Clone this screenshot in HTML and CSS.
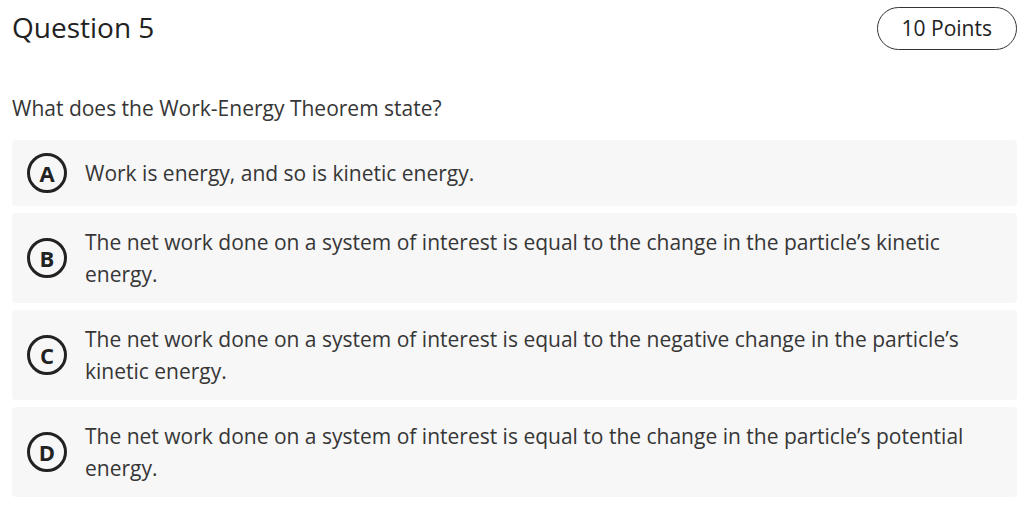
FILE: index.html
```html
<!DOCTYPE html>
<html lang="en">
<head>
    <meta charset="UTF-8">
    <title>Question 5</title>
    <link rel="stylesheet" href="styles.css">
</head>
<body>
    <div class="question">
        <div class="header">
            <h2>Question 5</h2>
            <div class="points">10 Points</div>
        </div>
        <p class="prompt">What does the Work-Energy Theorem state?</p>
        <div class="options">
            <div class="option">
                <span class="letter">A</span>
                <span class="text">Work is energy, and so is kinetic energy.</span>
            </div>
            <div class="option">
                <span class="letter">B</span>
                <span class="text">The net work done on a system of interest is equal to the change in the particle’s kinetic energy.</span>
            </div>
            <div class="option">
                <span class="letter">C</span>
                <span class="text">The net work done on a system of interest is equal to the negative change in the particle’s kinetic energy.</span>
            </div>
            <div class="option">
                <span class="letter">D</span>
                <span class="text">The net work done on a system of interest is equal to the change in the particle’s potential energy.</span>
            </div>
        </div>
    </div>
</body>
</html>
```

FILE: styles.css
```css
* {
    box-sizing: border-box;
    padding: 0;
    margin: 0;
}

body {
    font-family: "Open Sans", Arial, sans-serif;
    background-color: #ffffff;
    color: #363636;
}

.question {
    padding: 7px 18px 0 12px;
}

.header {
    display: flex;
    justify-content: space-between;
    align-items: center;
}

h2 {
    padding-bottom: 4px;
    font-size: 28px;
    font-weight: 500;
    color: #222222;
}

.points {
    height: 43px;
    padding: 0 24px;
    border: 1px solid #333333;
    border-radius: 22px;
    font-size: 21px;
    line-height: 41px;
    color: #222222;
}

.prompt {
    margin-top: 44px;
    font-size: 21px;
    line-height: 28px;
}

.options {
    display: flex;
    flex-direction: column;
    gap: 7px;
    margin-top: 18px;
}

.option {
    display: flex;
    align-items: center;
    min-height: 65px;
    padding: 13px 40px 13px 15px;
    background-color: #f7f7f7;
    border-radius: 4px;
    font-size: 21px;
    line-height: 32px;
}

.letter {
    flex: none;
    width: 40px;
    height: 40px;
    margin-right: 18px;
    border: 3px solid #222222;
    border-radius: 50%;
    display: flex;
    justify-content: center;
    align-items: center;
    font-size: 22px;
    font-weight: 700;
    line-height: 1;
    color: #222222;
}
```
